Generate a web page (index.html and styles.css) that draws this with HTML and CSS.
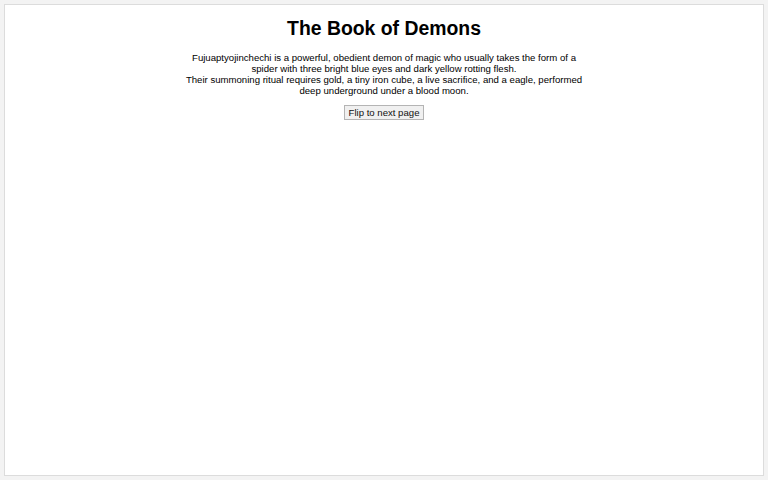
FILE: index.html
```html
<!DOCTYPE html>
<html lang="en">
<head>
    <meta charset="UTF-8">
    <title>The Book of Demons</title>
    <link rel="stylesheet" href="styles.css">
</head>
<body>
    <div class="page">
        <h1>The Book of Demons</h1>
        <p class="entry">
            Fujuaptyojinchechi is a powerful, obedient demon of magic who usually takes the form of a spider with three bright blue eyes and dark yellow rotting flesh.<br>
            Their summoning ritual requires gold, a tiny iron cube, a live sacrifice, and a eagle, performed deep underground under a blood moon.
        </p>
        <button class="flip">Flip to next page</button>
    </div>
</body>
</html>
```

FILE: styles.css
```css
html, body {
    height: 100%;
}
body {
    margin: 0;
    padding: 4px;
    box-sizing: border-box;
    background-color: #f3f3f3;
    font-family: 'Liberation Sans', Arial, sans-serif;
    color: #000;
}
.page {
    height: 100%;
    box-sizing: border-box;
    background-color: #fff;
    border: 1px solid #dcdcdc;
    display: flex;
    flex-direction: column;
    align-items: center;
    padding-top: 12px;
}
h1 {
    font-size: 19.4px;
    margin: 0 0 12px;
}
.entry {
    font-size: 9.6px;
    line-height: 11px;
    text-align: center;
    max-width: 400px;
    margin: 0 0 9px;
}
.flip {
    font-family: 'Liberation Sans', Arial, sans-serif;
    font-size: 9.6px;
    color: #111;
    padding: 1px 4px;
    background-color: #f0f0f0;
    border: 1px solid #b4b4b4;
    border-radius: 0;
}
```
